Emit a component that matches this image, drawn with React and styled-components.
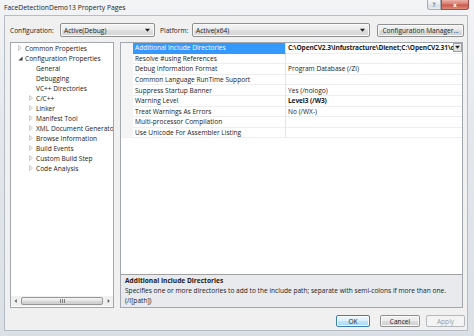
import React from "react";
import styled, { createGlobalStyle } from "styled-components";

const GlobalStyle = createGlobalStyle`
	body {
		margin: 0;
		background: #dfe4ea;
		font-family: "Open Sans", "Noto Sans", sans-serif;
	}
`;

const Window = styled.div`
	width: 474px;
	height: 336px;
	overflow: hidden;
	display: flex;
	flex-direction: column;
	background: linear-gradient(#f3f4f6, #e3e7ec 40%, #dbe0e7);
	font-size: 6.6px;
	color: #1a1a1a;
`;

const TitleBar = styled.div`
	height: 15px;
	display: flex;
	align-items: flex-start;
	padding-left: 4px;
	flex-shrink: 0;
`;

const Title = styled.div`
	line-height: 16px;
	font-size: 6.8px;
	color: #222;
`;

const Caption = styled.div`
	margin-left: auto;
	margin-right: 5px;
	display: flex;
`;

const CaptionButton = styled.div`
	width: ${(p) => p.$w}px;
	height: 10px;
	display: flex;
	align-items: center;
	justify-content: center;
	box-sizing: border-box;
	border: 1px solid ${(p) => (p.$close ? "#a0504a" : "#a4acb5")};
	border-top: none;
	border-radius: ${(p) => (p.$close ? "0 0 3px 0" : "0 0 0 3px")};
	background: ${(p) =>
		p.$close
			? "linear-gradient(#eab2aa, #d97b6f 45%, #c9574a 55%, #dd8c7c)"
			: "linear-gradient(#f6f7f9, #e6e9ed 50%, #d8dde3 55%, #e8ecf0)"};
	color: ${(p) => (p.$close ? "#fff" : "#7a8490")};
	font-family: "DejaVu Sans", sans-serif;
	font-size: 6px;
	font-weight: bold;
`;

const Body = styled.div`
	margin-left: 4px;
	width: 464px;
	height: 316px;
	box-sizing: border-box;
	border: 1px solid #b5bcc4;
	background: #f0f0f0;
	display: flex;
	flex-direction: column;
	padding: 7px 2px 0 5px;
`;

const TopRow = styled.div`
	height: 14px;
	display: flex;
	align-items: center;
`;

const Label = styled.div`
	width: ${(p) => p.$w}px;
	margin-left: ${(p) => p.$ml || 0}px;
`;

const Combo = styled.div`
	width: ${(p) => p.$w}px;
	height: 14px;
	box-sizing: border-box;
	border: 1px solid #8e8f8f;
	border-radius: 2px;
	background: linear-gradient(#f4f4f4, #ebebeb 50%, #dedede 50%, #d6d6d6);
	display: flex;
	align-items: center;
	padding: 0 4px 0 3px;
	box-shadow: inset 0 0 0 1px #fbfbfb;
`;

const ComboText = styled.div`
	flex: 1;
`;

const Button = styled.div`
	width: ${(p) => p.$w}px;
	height: ${(p) => p.$h || 12}px;
	margin-left: ${(p) => p.$ml || 0}px;
	box-sizing: border-box;
	border: 1px solid ${(p) => (p.$default ? "#3c7fb1" : p.$disabled ? "#b5b9bc" : "#8e8f8f")};
	border-radius: 2px;
	background: ${(p) =>
		p.$default
			? "linear-gradient(#eaf6fd, #d9f0fc 50%, #bee6fd 50%, #a7d9f5)"
			: p.$disabled
			? "#f4f4f4"
			: "linear-gradient(#f2f2f2, #ebebeb 50%, #dddddd 50%, #cfcfcf)"};
	color: ${(p) => (p.$disabled ? "#9a9a9a" : "#1e1e1e")};
	display: flex;
	align-items: center;
	justify-content: center;
	box-shadow: inset 0 0 0 1px ${(p) => (p.$disabled ? "#f4f4f4" : "#fbfbfb")};
`;

const Main = styled.div`
	margin-top: 5px;
	height: 266px;
	display: flex;
	gap: 6px;
`;

const TreePanel = styled.div`
	width: 104px;
	box-sizing: border-box;
	border: 1px solid #a3a8ae;
	background: #fff;
	display: flex;
	flex-direction: column;
`;

const TreeList = styled.div`
	flex: 1;
	overflow: hidden;
`;

const TreeRow = styled.div`
	height: 10px;
	display: flex;
	align-items: center;
	padding-left: ${(p) => 5 + p.$depth * 11}px;
	white-space: nowrap;
`;

const Expander = styled.div`
	width: 8px;
	height: 10px;
	margin-right: 1px;
	display: flex;
	align-items: center;
	justify-content: center;
	flex-shrink: 0;
`;

const HScroll = styled.div`
	height: 10px;
	margin: 0 0 1px 0;
	display: flex;
	align-items: center;
	background: #f0f0f0;
`;

const ScrollArrow = styled.div`
	width: 9px;
	height: 10px;
	display: flex;
	align-items: center;
	justify-content: center;
`;

const Thumb = styled.div`
	flex: 1;
	height: 8px;
	margin: 0 1px;
	box-sizing: border-box;
	border: 1px solid #979797;
	border-radius: 2px;
	background: linear-gradient(#f3f3f3, #e6e6e6 50%, #d8d8d8 50%, #d0d0d0);
	display: flex;
	align-items: center;
	justify-content: center;
	gap: 1px;
`;

const Grip = styled.div`
	width: 1px;
	height: 4px;
	background: #808080;
`;

const PropPanel = styled.div`
	width: 343px;
	box-sizing: border-box;
	border: 1px solid #a3a8ae;
	background: #fff;
	display: flex;
	flex-direction: column;
`;

const Grid = styled.div`
	flex: 1;
	overflow: hidden;
`;

const PropRow = styled.div`
	height: 10.6px;
	display: flex;
	align-items: stretch;
`;

const Gutter = styled.div`
	width: 12px;
	background: #f4f4f4;
	flex-shrink: 0;
`;

const NameCell = styled.div`
	width: 153px;
	box-sizing: border-box;
	border-right: 1px solid #e4e4e4;
	border-bottom: 1px solid ${(p) => (p.$selected ? "#3399ff" : "#eeeeee")};
	padding-left: 2px;
	display: flex;
	align-items: center;
	white-space: nowrap;
	overflow: hidden;
	background: ${(p) => (p.$selected ? "#3399ff" : "#fff")};
	color: ${(p) => (p.$selected ? "#fff" : "#1a1a1a")};
`;

const ValueCell = styled.div`
	flex: 1;
	min-width: 0;
	border-bottom: 1px solid #eeeeee;
	padding-left: 2px;
	display: flex;
	align-items: center;
	font-weight: ${(p) => (p.$bold ? "bold" : "normal")};
	letter-spacing: ${(p) => (p.$bold ? "-0.12px" : "0")};
`;

const ValueText = styled.div`
	flex: 1;
	white-space: nowrap;
	overflow: hidden;
`;

const DropButton = styled.div`
	width: 9px;
	height: 9px;
	box-sizing: border-box;
	border: 1px solid #a0a0a0;
	background: linear-gradient(#f4f4f4, #dcdcdc);
	display: flex;
	align-items: center;
	justify-content: center;
	flex-shrink: 0;
`;

const Description = styled.div`
	height: 33px;
	box-sizing: border-box;
	border-top: 1px solid #a0a0a0;
	background: #e8eaee;
	padding: 1px 4px 0;
	line-height: 10px;
`;

const DescTitle = styled.div`
	font-weight: bold;
`;

const Footer = styled.div`
	margin-top: 7px;
	height: 12px;
	display: flex;
	justify-content: flex-end;
`;

const Arrow = ({ dir = "down", color = "#1e1e1e", size = 5 }) => {
	const pts = {
		down: "0,1 6,1 3,4.5",
		left: "4,0 4,6 1,3",
		right: "1,0 1,6 4,3",
	};
	return (
		<svg width={size} height={size} viewBox="0 0 6 6">
			<polygon points={pts[dir]} fill={color} />
		</svg>
	);
};

const ExpandIcon = ({ open }) =>
	open ? (
		<svg width="5" height="5" viewBox="0 0 6 6">
			<polygon points="5.5,0.5 5.5,5.5 0.5,5.5" fill="#3a3a3a" />
		</svg>
	) : (
		<svg width="4" height="6" viewBox="0 0 4 6">
			<polygon points="0.6,0.6 0.6,5.4 3.4,3" fill="none" stroke="#b8b8b8" strokeWidth="0.8" />
		</svg>
	);

const tree = [
	{ label: "Common Properties", depth: 0, node: "closed" },
	{ label: "Configuration Properties", depth: 0, node: "open" },
	{ label: "General", depth: 1 },
	{ label: "Debugging", depth: 1 },
	{ label: "VC++ Directories", depth: 1 },
	{ label: "C/C++", depth: 1, node: "closed" },
	{ label: "Linker", depth: 1, node: "closed" },
	{ label: "Manifest Tool", depth: 1, node: "closed" },
	{ label: "XML Document Generator", depth: 1, node: "closed" },
	{ label: "Browse Information", depth: 1, node: "closed" },
	{ label: "Build Events", depth: 1, node: "closed" },
	{ label: "Custom Build Step", depth: 1, node: "closed" },
	{ label: "Code Analysis", depth: 1, node: "closed" },
];

const props = [
	{
		name: "Additional Include Directories",
		value: "C:\\OpenCV2.3\\infustracture\\Dienet;C:\\OpenCV2.31\\opencv\\include;%(AdditionalIncludeDirectories)",
		bold: true,
		selected: true,
	},
	{ name: "Resolve #using References", value: "" },
	{ name: "Debug Information Format", value: "Program Database (/Zi)" },
	{ name: "Common Language RunTime Support", value: "" },
	{ name: "Suppress Startup Banner", value: "Yes (/nologo)" },
	{ name: "Warning Level", value: "Level3 (/W3)", bold: true },
	{ name: "Treat Warnings As Errors", value: "No (/WX-)" },
	{ name: "Multi-processor Compilation", value: "" },
	{ name: "Use Unicode For Assembler Listing", value: "" },
];

export default function App() {
	return (
		<>
			<GlobalStyle />
			<Window>
				<TitleBar>
					<Title>FaceDetectionDemo13 Property Pages</Title>
					<Caption>
						<CaptionButton $w={14}>?</CaptionButton>
						<CaptionButton $w={28} $close>x</CaptionButton>
					</Caption>
				</TitleBar>
				<Body>
					<TopRow>
						<Label $w={50}>Configuration:</Label>
						<Combo $w={95}>
							<ComboText>Active(Debug)</ComboText>
							<Arrow />
						</Combo>
						<Label $w={32} $ml={5}>Platform:</Label>
						<Combo $w={178}>
							<ComboText>Active(x64)</ComboText>
							<Arrow />
						</Combo>
						<Button $w={87} $h={13} $ml={7}>Configuration Manager...</Button>
					</TopRow>
					<Main>
						<TreePanel>
							<TreeList>
								{tree.map((t) => (
									<TreeRow key={t.label} $depth={t.depth}>
										<Expander>{t.node && <ExpandIcon open={t.node === "open"} />}</Expander>
										{t.label}
									</TreeRow>
								))}
							</TreeList>
							<HScroll>
								<ScrollArrow>
									<Arrow dir="left" color="#555" size={4} />
								</ScrollArrow>
								<Thumb>
									<Grip />
									<Grip />
									<Grip />
								</Thumb>
								<ScrollArrow>
									<Arrow dir="right" color="#555" size={4} />
								</ScrollArrow>
							</HScroll>
						</TreePanel>
						<PropPanel>
							<Grid>
								{props.map((p) => (
									<PropRow key={p.name}>
										<Gutter />
										<NameCell $selected={p.selected}>{p.name}</NameCell>
										<ValueCell $bold={p.bold}>
											<ValueText>{p.value}</ValueText>
											{p.selected && (
												<DropButton>
													<Arrow size={5} />
												</DropButton>
											)}
										</ValueCell>
									</PropRow>
								))}
							</Grid>
							<Description>
								<DescTitle>Additional Include Directories</DescTitle>
								<div>
									Specifies one or more directories to add to the include path; separate with semi-colons if more than one.
									<br />
									(/I[path])
								</div>
							</Description>
						</PropPanel>
					</Main>
					<Footer>
						<Button $w={34} $default>OK</Button>
						<Button $w={40} $ml={10}>Cancel</Button>
						<Button $w={39} $ml={6} $disabled>Apply</Button>
					</Footer>
				</Body>
			</Window>
		</>
	);
}
